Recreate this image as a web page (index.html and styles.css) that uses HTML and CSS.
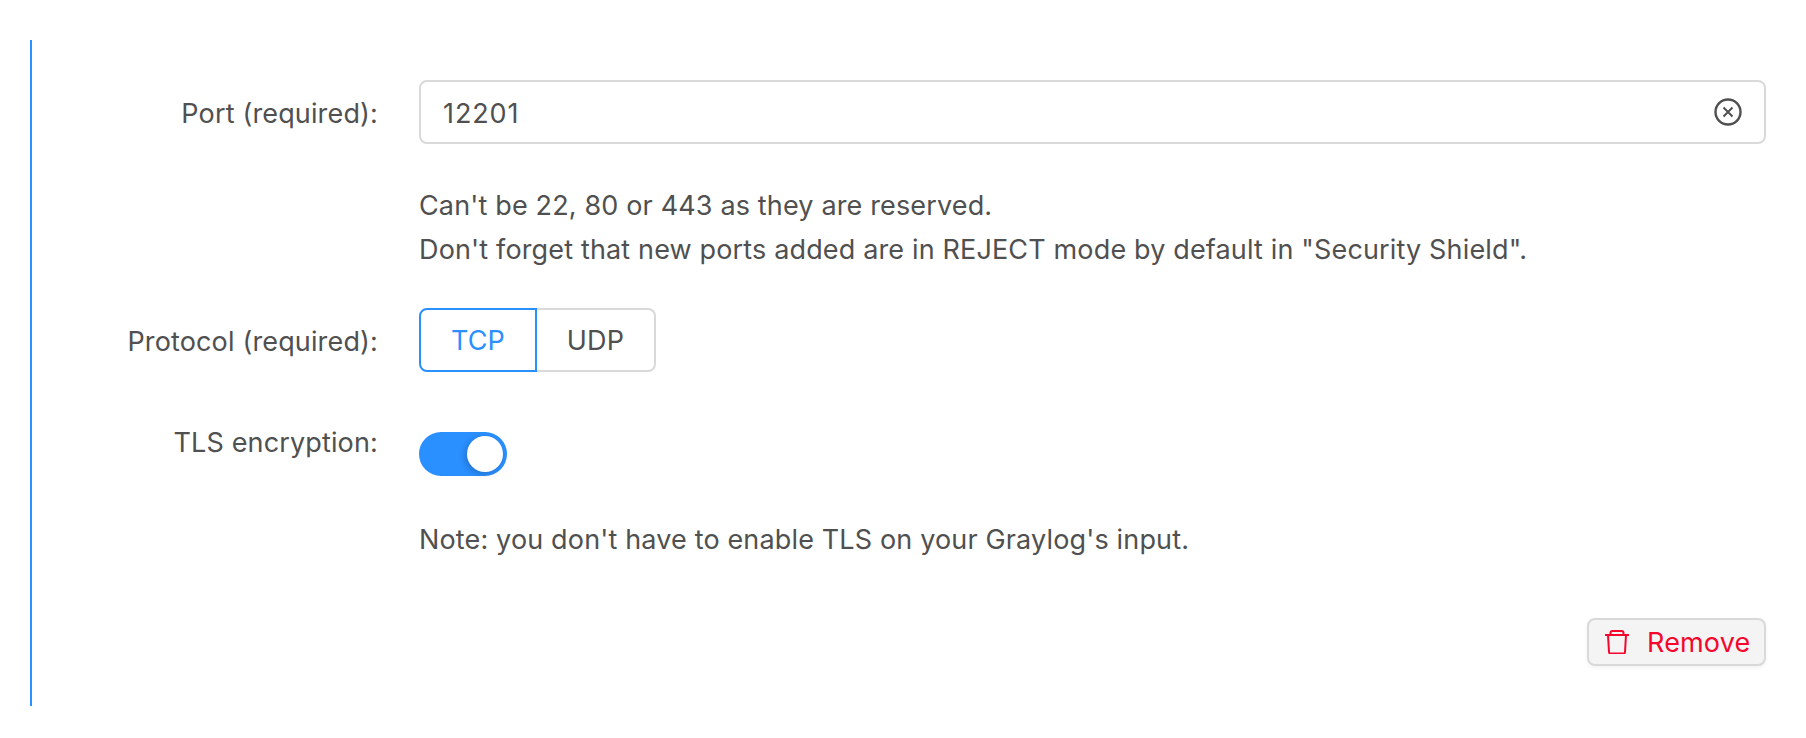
FILE: index.html
```html
<!DOCTYPE html>
<html lang="en">
<head>
  <meta charset="UTF-8">
  <title>Port settings</title>
  <link rel="stylesheet" href="styles.css">
</head>
<body>
<div class="panel">
  <div class="form">
    <label class="field-label">Port (required):</label>
    <div class="input">
      <span class="input-value">12201</span>
      <svg class="clear-icon" viewBox="0 0 28 28" width="28" height="28">
        <circle cx="14" cy="14" r="12.5" fill="none" stroke="#505050" stroke-width="2.400"/>
        <path d="M9.500 9.500l9 9M18.500 9.500l-9 9" fill="none" stroke="#505050" stroke-width="2"/>
      </svg>
    </div>

    <div class="help help-port">
      Can't be 22, 80 or 443 as they are reserved.<br>
      Don't forget that new ports added are in REJECT mode by default in "Security Shield".
    </div>

    <label class="field-label">Protocol (required):</label>
    <div class="segments">
      <div class="segment active">TCP</div>
      <div class="segment">UDP</div>
    </div>

    <label class="field-label field-label-top">TLS encryption:</label>
    <div class="switch"><span class="knob"></span></div>

    <div class="help help-tls">Note: you don't have to enable TLS on your Graylog's input.</div>
  </div>

  <div class="actions">
    <button class="remove-btn" type="button">
      <svg viewBox="0 0 24 24" width="24" height="24">
        <path d="M0 5h24M5.500 5V3Q5.500 1 7.500 1h9Q18.500 1 18.500 3V5M3 5l1 17Q4.100 23.500 5.500 23.500h13q1.400 0 1.500-1.500L21 5" fill="none" stroke="#f5072d" stroke-width="2"/>
      </svg>
      <span class="remove-text">Remove</span>
    </button>
  </div>
</div>
</body>
</html>
```

FILE: styles.css
```css
body{margin:0;background:#fff;color:#505050;font:27px/44px Inter,"Liberation Sans",sans-serif;letter-spacing:.15px;}
.panel{margin:40px 40px 0 30px;height:666px;padding-top:40px;box-sizing:border-box;border-left:2px solid #2a8fff;}
.form{display:grid;grid-template-columns:346px 1fr;column-gap:41px;}
.field-label{text-align:right;align-self:center;padding-top:4px;}
.field-label-top{align-self:start;padding-top:0;line-height:22px;margin-top:60px;}
.input{display:flex;align-items:center;justify-content:space-between;height:64px;box-sizing:border-box;padding:0 22px;border:2px solid #d9d9d9;border-radius:8px;}
.input-value{padding-top:3px;letter-spacing:.9px;}
.help{grid-column:2;}
.help-port{margin:40px 0 36px;}
.help-tls{margin:42px 0 0;}
.segments{display:flex;width:237px;height:64px;}
.segment{flex:1;display:flex;align-items:center;justify-content:center;box-sizing:border-box;padding-top:2px;border:2px solid #d9d9d9;border-left:0;border-radius:0 8px 8px 0;}
.segment.active{flex:0 0 118px;color:#2a8fff;border:2px solid #2a8fff;border-radius:8px 0 0 8px;}
.switch{display:flex;justify-content:flex-end;align-items:center;width:88px;height:44px;margin-top:60px;box-sizing:border-box;padding-right:4px;background:#2a8fff;border-radius:22px;}
.knob{width:36px;height:36px;background:#fff;border-radius:50%;box-shadow:-2px 2px 6px rgba(0,0,0,.2);}
.actions{display:flex;justify-content:flex-end;margin-top:56px;}
.remove-btn{display:flex;align-items:center;gap:18px;width:179px;height:48px;box-sizing:border-box;padding:0 0 0 16px;background:#f4f4f4;border:2px solid #d9d9d9;border-radius:8px;color:#f5072d;font:inherit;letter-spacing:inherit;box-shadow:0 2px 4px rgba(0,0,0,.05);}
.remove-text{padding-top:2px;}
```
